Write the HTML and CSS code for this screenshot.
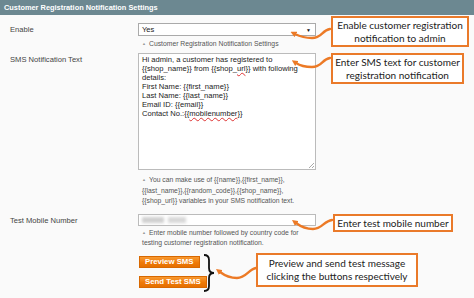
FILE: index.html
```html
<!DOCTYPE html>
<html>
<head>
<meta charset="utf-8">
<link rel="stylesheet" href="styles.css">
</head>
<body>
<div class="page">
  <div class="header">Customer Registration Notification Settings</div>
  <div class="form">
    <div class="row">
      <div class="label">Enable</div>
      <div class="field">
        <div class="select"><span>Yes</span><span class="caret">▼</span></div>
        <div class="note note-1"><span class="tri">▲</span>Customer Registration Notification Settings</div>
      </div>
    </div>
    <div class="row row-sms">
      <div class="label">SMS Notification Text</div>
      <div class="field">
        <div class="textarea">Hi admin, a customer has registered to<br>{{shop_name}} from {{shop_<span class="sp">url</span>}} with following<br>details:<br>First Name: {{first_name}}<br>Last Name: {{last_name}}<br>Email ID: {{email}}<br>Contact No.:{{<span class="sp">mobilenumber</span>}}<span class="grip"></span></div>
        <div class="note note-3"><span class="tri">▲</span>You can make use of {{name}},{{first_name}},<br>{{last_name}},{{random_code}},{{shop_name}},<br>{{shop_url}} variables in your SMS notification text.</div>
      </div>
    </div>
    <div class="row row-mobile">
      <div class="label">Test Mobile Number</div>
      <div class="field">
        <div class="input"><span class="blur"></span><span class="blur b2"></span></div>
        <div class="note note-2"><span class="tri">▲</span>Enter mobile number followed by country code for<br>testing customer registration notification.</div>
        <div class="buttons">
          <button class="btn">Preview SMS</button>
          <button class="btn">Send Test SMS</button>
        </div>
      </div>
    </div>
  </div>

  <div class="callout c1">Enable customer registration<br>notification to admin</div>
  <div class="callout c2">Enter SMS text for customer<br>registration notification</div>
  <div class="callout c3">Enter test mobile number</div>
  <div class="callout c4">Preview and send test message<br>clicking the buttons respectively</div>

  <svg class="overlay" width="474" height="298" viewBox="0 0 474 298">
    <defs>
      <marker id="ah" markerWidth="6" markerHeight="6" refX="1" refY="3" orient="auto" markerUnits="userSpaceOnUse" viewBox="0 0 6 6">
        <path d="M6,0 L0,3 L6,6 Z" fill="#ec7a26" transform="rotate(180 3 3)"/>
      </marker>
    </defs>
    <path class="arrow" d="M330,29 C322,30 322,38 312,38 C304,38 299,36 295,34"/>
    <path class="arrow" d="M330,58 C322,59 322,67 312,67 C304,67 299,65 296,63"/>
    <path class="arrow" d="M332,220 C324,221 322,229 313,229 C305,229 300,226 296,223"/>
    <path class="arrow" d="M256,268 C249,269 246,278 237,278 C229,278 224,275 220,272"/>
    <path class="brace" d="M204,255 Q209,255 209,260 L209,268 Q209,273 214,273 Q209,273 209,278 L209,286 Q209,291 204,291"/>
  </svg>
</div>
</body>
</html>
```

FILE: styles.css
```css
* { box-sizing: border-box; }
html, body { margin: 0; padding: 0; }
body {
  background: #fafafa;
  font-family: "Liberation Sans", Arial, sans-serif;
  color: #333;
  width: 474px;
  height: 298px;
  overflow: hidden;
}
.page { position: relative; width: 474px; height: 298px; }
.header {
  height: 15px;
  line-height: 15px;
  background: #6c8891;
  color: #fff;
  font-weight: bold;
  font-size: 7.4px;
  padding-left: 4px;
}
.form { padding: 8px 0 0 10px; }
.row {
  display: grid;
  grid-template-columns: 128px 178px;
}
.label {
  font-size: 7.6px;
  line-height: 13px;
  color: #444;
}
.field { display: flex; flex-direction: column; align-items: flex-start; }
.select {
  width: 178px;
  height: 13px;
  border: 1px solid #aaa;
  background: #fff;
  display: flex;
  justify-content: space-between;
  align-items: center;
  padding: 0 4px 0 3px;
  font-size: 7.6px;
  color: #222;
}
.caret { font-size: 5px; color: #111; }
.note {
  font-size: 6.8px;
  color: #555;
  padding-left: 4px;
}
.tri { font-size: 4px; color: #999; margin-right: 3px; vertical-align: 1px; }
.note-1 { margin-top: 3px; line-height: 10px; }
.row-sms { margin-top: 4px; }
.textarea {
  position: relative;
  width: 178px;
  height: 117px;
  border: 1px solid #bbb;
  background: #fff;
  font-size: 7.6px;
  line-height: 9px;
  padding: 1px 3px;
  color: #222;
}
.sp { text-decoration: underline wavy #d33; text-decoration-thickness: 0.5px; }
.grip {
  position: absolute;
  right: 1px;
  bottom: 1px;
  width: 5px;
  height: 5px;
  background: linear-gradient(135deg, transparent 45%, #aaa 45%, #aaa 55%, transparent 55%, transparent 75%, #aaa 75%, #aaa 85%, transparent 85%);
}
.note-3 { margin-top: 5px; line-height: 10.5px; }
.row-mobile { margin-top: 7px; }
.input {
  width: 178px;
  height: 12px;
  border: 1px solid #bbb;
  background: #fff;
  display: flex;
  align-items: center;
  padding-left: 3px;
  gap: 4px;
}
.blur { display: block; width: 22px; height: 6px; background: #d0d0d0; filter: blur(1.5px); }
.blur.b2 { width: 18px; background: #d8d8d8; }
.note-2 { margin-top: 2px; line-height: 10px; }
.buttons { display: flex; flex-direction: column; align-items: flex-start; gap: 8px; margin-top: 8px; padding-left: 1px; }
.btn {
  height: 12px;
  padding: 0 5px;
  border: 1px solid #d86800;
  background: linear-gradient(#f89a32, #ef7a08 55%, #e56f00);
  color: #fff;
  font-family: "Liberation Sans", Arial, sans-serif;
  font-weight: bold;
  font-size: 7.8px;
  line-height: 10px;
  border-radius: 0;
}
.callout {
  position: absolute;
  background: #fff;
  border: 2px solid #ea7a2a;
  color: #222;
  font-family: Lato, "Open Sans", sans-serif;
  font-size: 10px;
  line-height: 13px;
  text-align: center;
  display: flex;
  align-items: center;
  justify-content: center;
}
.c1 { left: 331px; top: 16px; width: 138px; height: 31px; }
.c2 { left: 331px; top: 53px; width: 133px; height: 31px; }
.c3 { left: 333px; top: 214px; width: 120px; height: 18px; }
.c4 { left: 256px; top: 253px; width: 162px; height: 34px; }
.overlay { position: absolute; left: 0; top: 0; pointer-events: none; }
.arrow { fill: none; stroke: #ec7a26; stroke-width: 2.4; marker-end: url(#ah); stroke-linecap: round; }
.brace { fill: none; stroke: #111; stroke-width: 1.8; }
```
